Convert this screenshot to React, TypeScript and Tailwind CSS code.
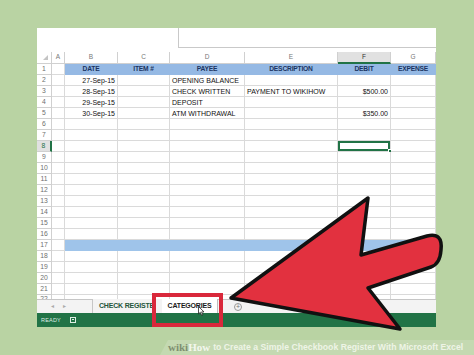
import React from "react";

const cols = ["A", "B", "C", "D", "E", "F", "G"];

type Row = { n: number; cells: string[]; blue?: string; head?: boolean };

const rows: Row[] = [
  { n: 1, cells: ["", "DATE", "ITEM #", "PAYEE", "DESCRIPTION", "DEBIT", "EXPENSE"], blue: "bg-[#95b9e4]", head: true },
  { n: 2, cells: ["", "27-Sep-15", "", "OPENING BALANCE", "", "", ""] },
  { n: 3, cells: ["", "28-Sep-15", "", "CHECK WRITTEN", "PAYMENT TO WIKIHOW", "$500.00", ""] },
  { n: 4, cells: ["", "29-Sep-15", "", "DEPOSIT", "", "", ""] },
  { n: 5, cells: ["", "30-Sep-15", "", "ATM WITHDRAWAL", "", "$350.00", ""] },
  ...Array.from({ length: 17 }, (_, i) => ({
    n: i + 6,
    cells: ["", "", "", "", "", "", ""],
    blue: i + 6 === 17 ? "bg-[#9fc4ea]" : undefined,
  })),
];

function Cell({ row, ci }: { row: Row; ci: number }) {
  const text = row.cells[ci];
  const selected = row.n === 8 && ci === 5;
  const isBlue = row.blue && ci > 0;
  const align =
    row.head ? "justify-center" : ci === 1 || ci === 5 ? "justify-end pr-[2px]" : "justify-start pl-[2px]";
  return (
    <div
      className={`relative flex h-[11px] items-center border-b border-r border-[#dadada] ${align} ${
        isBlue ? `${row.blue} border-b-transparent border-r-transparent` : "bg-white"
      } ${selected ? "shadow-[inset_0_0_0_2px_#217346]" : ""}`}
    >
      <span
        className={`whitespace-nowrap leading-none ${
          row.head ? "text-[6.7px] font-bold tracking-[-0.2px] text-[#1a3462]" : "text-[7px] text-[#111]"
        }`}
      >
        {text}
      </span>
      {selected && <div className="absolute -bottom-[2px] -right-[2px] h-[4px] w-[4px] border border-white bg-[#217346]" />}
    </div>
  );
}

export default function App() {
  return (
    <div className="relative h-[355px] w-[474px] overflow-hidden bg-[#b9d3a3] font-['Liberation_Sans',Arial,sans-serif]">
      <div className="pl-[37px] pt-[28px]">
        <div className="flex w-[399px] flex-col bg-white">
          {/* formula bar */}
          <div className="flex h-[24px]">
            <div className="w-[141px]" />
            <div className="h-[20px] flex-1 border-b border-l border-[#c9c9c9] bg-white" />
          </div>

          {/* sheet grid */}
          <div className="h-[247px] overflow-hidden">
            <div className="grid grid-cols-[15px_13px_53px_52px_75px_93px_53px_45px]">
              <div className="relative h-[12px] border-b border-r border-[#d0d0d0]">
                <div className="absolute bottom-[3px] right-[3px] h-0 w-0 border-b-[5px] border-l-[5px] border-b-[#c4c4c4] border-l-transparent" />
              </div>
              {cols.map((c) => (
                <div
                  key={c}
                  className={`flex h-[12px] items-center justify-center border-r text-[6.5px] leading-none ${
                    c === "F"
                      ? "border-b-2 border-b-[#217346] border-r-[#d0d0d0] bg-[#e1e1e1] text-[#333]"
                      : "border-b border-[#d0d0d0] text-[#777]"
                  }`}
                >
                  {c}
                </div>
              ))}
              {rows.map((row) => (
                <React.Fragment key={row.n}>
                  <div
                    className={`flex h-[11px] items-center justify-center border-b border-[#d0d0d0] text-[6.8px] leading-none ${
                      row.n === 8
                        ? "border-r-2 border-r-[#217346] bg-[#e1e1e1] text-[#217346]"
                        : "border-r text-[#6f6f6f]"
                    } ${row.n === 22 ? "items-start pt-[1px]" : ""}`}
                  >
                    {row.n}
                  </div>
                  {cols.map((c, ci) => (
                    <Cell key={c} row={row} ci={ci} />
                  ))}
                </React.Fragment>
              ))}
            </div>
          </div>

          {/* sheet tabs */}
          <div className="flex h-[14px] items-stretch bg-[#f3f3f3] text-[7px]">
            <div className="flex w-[55px] items-center gap-[9px] border-t border-[#c6c6c6] pl-[14px] text-[6px] text-[#aaa]">
              <span>◂</span>
              <span>▸</span>
            </div>
            <div className="flex w-[70px] items-center border-l border-[#c6c6c6] bg-[#f3f3f3] pl-[6px] font-bold tracking-[-0.2px] text-[#24553b]">
              CHECK REGISTE
            </div>
            <div className="flex w-[56px] items-center justify-center border-r border-[#bdbdbd] bg-white font-bold tracking-[-0.2px] text-[#1a1a1a]">
              CATEGORIES
            </div>
            <div className="flex flex-1 items-center border-t border-[#c6c6c6] pl-[16px]">
              <div className="flex h-[8px] w-[8px] items-center justify-center rounded-full border border-[#999] text-[7px] leading-none text-[#777]">
                +
              </div>
            </div>
          </div>

          {/* status bar */}
          <div className="flex h-[14px] items-center gap-[9px] bg-[#217346] pl-[4px]">
            <span className="text-[5.5px] tracking-[0.2px] text-[#dfeee5]">READY</span>
            <div className="flex h-[6px] w-[6px] flex-col justify-between border border-[#dfeee5] p-[1px]">
              <div className="h-[1px] w-full bg-[#dfeee5]" />
            </div>
          </div>
        </div>
      </div>

      {/* wikiHow caption */}
      <div className="mt-[13px] flex justify-end">
        <div className="flex h-[15px] w-[314px] items-center bg-[#c4d9b1] pl-[8px] [clip-path:polygon(8px_0,100%_0,100%_100%,0_100%)]">
          <span className="font-['Liberation_Serif',serif] text-[11px] font-bold leading-none text-[#7f8f70]">wiki</span>
          <span className="font-['Liberation_Serif',serif] text-[11px] font-bold leading-none text-[#f3f7ee]">How</span>
          <span className="ml-[3px] whitespace-nowrap text-[8.7px] font-bold leading-none text-[#eef4e6]">
            to Create a Simple Checkbook Register With Microsoft Excel
          </span>
        </div>
      </div>

      {/* red highlight box */}
      <div className="absolute left-[152px] top-[293px] h-[34px] w-[71px] border-[4px] border-[#d9283b]" />

      {/* mouse cursor */}
      <svg className="absolute left-[198px] top-[306px]" width="7" height="10" viewBox="0 0 7 10">
        <path d="M0.5 0.5 L0.5 8 L2.3 6.3 L3.6 9.3 L4.8 8.8 L3.6 5.9 L6 5.9 Z" fill="white" stroke="#222" strokeWidth="0.8" />
      </svg>

      {/* big arrow */}
      <svg className="pointer-events-none absolute left-0 top-0" width="474" height="355" viewBox="0 0 474 355">
        <path
          d="M231 298 L368 198 L361 255 L427 236 Q443 232 441 250 Q440 264 431 267 L368 288 L400 329 Z"
          fill="#e2313f"
          stroke="#111"
          strokeWidth="3.5"
          strokeLinejoin="round"
        />
      </svg>
    </div>
  );
}
